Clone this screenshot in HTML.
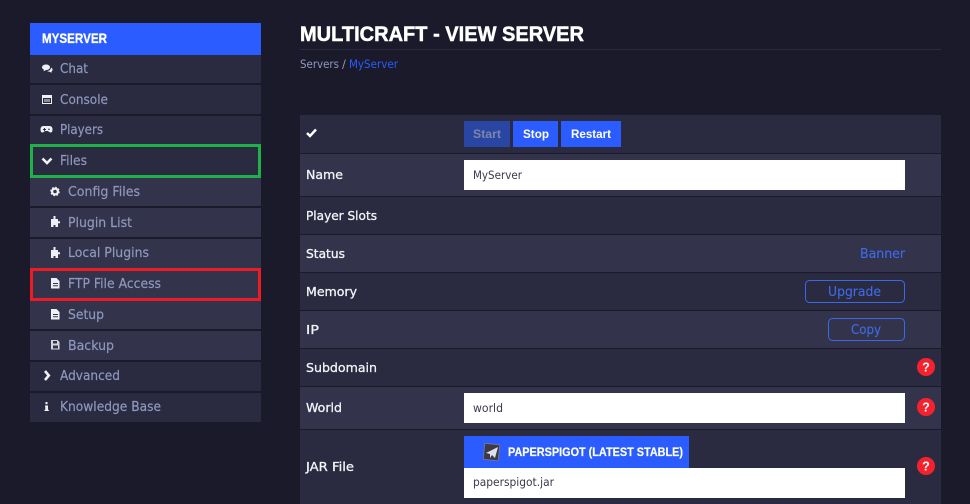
<!DOCTYPE html>
<html><head><meta charset="utf-8"><style>
html,body{margin:0;padding:0;background:#1a1a2b;width:970px;height:504px;overflow:hidden}
svg{display:block}
text{font-family:"DejaVu Sans",sans-serif}
.s{font-size:13px;fill:#8f99bd;stroke:#8f99bd;stroke-width:.18px}
.w{font-size:12.5px;fill:#f4f4f8;stroke:#f4f4f8;stroke-width:.3px}
.b{font-family:"Liberation Sans",sans-serif;font-weight:700;fill:#fff}
.i{font-size:11.500px;fill:#3a3a4a}
.l{font-size:13px;fill:#3f6ae8;stroke:#3f6ae8;stroke-width:.12px}
</style></head><body>
<svg width="970" height="504" viewBox="0 0 970 504" xmlns="http://www.w3.org/2000/svg">
<rect width="970" height="504" fill="#1a1a2b"/>
<!-- sidebar -->
<rect x="30" y="23" width="231" height="32" fill="#2b5cff"/>
<g fill="#2a2b40">
<rect x="30" y="55" width="231" height="28"/><rect x="30" y="85" width="231" height="29"/><rect x="30" y="116" width="231" height="28"/><rect x="30" y="144" width="231" height="34"/>
<rect x="30" y="362" width="231" height="29"/><rect x="30" y="393" width="231" height="29"/></g>
<g fill="#33344c">
<rect x="30" y="178" width="231" height="28"/><rect x="30" y="208" width="231" height="29"/><rect x="30" y="239" width="231" height="29"/><rect x="30" y="268" width="231" height="33"/><rect x="30" y="301" width="231" height="28"/><rect x="30" y="331" width="231" height="29"/></g>
<rect x="31.500" y="145.500" width="228" height="31" fill="none" stroke="#1fb04a" stroke-width="3"/>
<rect x="31.500" y="269.500" width="228" height="30" fill="none" stroke="#ed1c24" stroke-width="3"/>
<text class="b" x="42" y="43" font-size="13.500" stroke="#fff" stroke-width=".3" textLength="65" lengthAdjust="spacingAndGlyphs">MYSERVER</text>
<text class="s" x="60" y="73" textLength="28" lengthAdjust="spacingAndGlyphs">Chat</text>
<text class="s" x="60" y="104" textLength="48" lengthAdjust="spacingAndGlyphs">Console</text>
<text class="s" x="60" y="134" textLength="43" lengthAdjust="spacingAndGlyphs">Players</text>
<text class="s" x="60" y="165" textLength="27" lengthAdjust="spacingAndGlyphs">Files</text>
<text class="s" x="68" y="196" textLength="72" lengthAdjust="spacingAndGlyphs">Config Files</text>
<text class="s" x="68" y="227" textLength="64" lengthAdjust="spacingAndGlyphs">Plugin List</text>
<text class="s" x="68" y="257" textLength="81" lengthAdjust="spacingAndGlyphs">Local Plugins</text>
<text class="s" x="68" y="288" textLength="93" lengthAdjust="spacingAndGlyphs">FTP File Access</text>
<text class="s" x="68" y="319" textLength="36" lengthAdjust="spacingAndGlyphs">Setup</text>
<text class="s" x="68" y="350" textLength="46" lengthAdjust="spacingAndGlyphs">Backup</text>
<text class="s" x="60" y="380" textLength="60" lengthAdjust="spacingAndGlyphs">Advanced</text>
<text class="s" x="60" y="411" textLength="101" lengthAdjust="spacingAndGlyphs">Knowledge Base</text>
<!-- sidebar icons -->
<g fill="#eef0f6">
<path d="M42 67.500c0-2 2-3 4-3s4 1 4 2.800-2 2.800-4 2.800l-2.500 1.200.5-1.600c-1-.5-2-1.200-2-2.200z"/><path d="M51 67.500c1 .6 1.600 1.300 1.600 2.200 0 .8-.6 1.400-1.200 1.800l.4 1.200-2.200-1c-1 0-1.800-.2-2.400-.7 2 0 3.800-1.400 3.800-3.500z" />
<path fill-rule="evenodd" d="M42 95h10v9H42zM43 98v5h8v-5z"/><rect x="44" y="99" width="6" height="3" opacity=".5"/>
<path fill-rule="evenodd" d="M44.500 126h5c2 0 3 1.500 3 3.500s-.6 3-2 3c-1.300 0-1.800-1.500-3-1.500h-2c-1.200 0-1.700 1.500-3 1.500-1.400 0-2-1-2-3s1-3.500 3-3.500zM44 128v1h-1v1h1v1h1v-1h1v-1h-1v-1zM49 128.500a.8.800 0 1 0 0 1.600.8.800 0 0 0 0-1.600z"/>
<path d="M42.500 158.500l4.500 4.500 4.500-4.500" fill="none" stroke="#eef0f6" stroke-width="2.600"/>
<circle cx="55" cy="191.500" r="2.900" fill="none" stroke="#eef0f6" stroke-width="2.300"/>
<circle cx="55" cy="191.500" r="4.300" fill="none" stroke="#eef0f6" stroke-width="1" stroke-dasharray="1.700 1.680"/>
<path d="M53.500 216h2v3h2.500v2.200h2v2h-2v3.800h-2.500v-2h-2v2h-2.500v-8h2.500z"/>
<path d="M53.500 247h2v3h2.500v2.200h2v2h-2v3.800h-2.500v-2h-2v2h-2.500v-8h2.500z"/>
<path fill-rule="evenodd" d="M51 278h5.500l3 3v7.500H51zM53 283v1h5v-1zM53 285.200v1h5v-1z"/>
<path fill-rule="evenodd" d="M51 309h5.500l3 3v7.500H51zM53 314v1h5v-1zM53 316.200v1h5v-1z"/>
<path fill-rule="evenodd" d="M51 340h6.500l2 2v7.500H51zM53 341v2.500h4V341zM53 345.500v3h5v-3z" opacity=".85"/>
<path d="M45 371l3.800 4.500-3.800 4.500" fill="none" stroke="#eef0f6" stroke-width="2.600"/>
<rect x="45.500" y="402" width="2" height="2.200"/><path d="M45 405.500h3v4.300h.8v1.200h-4.300v-1.200h.8v-3h-.3z"/>
</g>
<!-- header -->
<text class="b" x="300" y="41" font-size="21" stroke="#fff" stroke-width=".5" textLength="284" lengthAdjust="spacingAndGlyphs">MULTICRAFT - VIEW SERVER</text>
<rect x="300" y="49" width="641" height="1" fill="#2a2b40"/>
<text x="300" y="68" font-size="11.500" fill="#8f99bd" textLength="39" lengthAdjust="spacingAndGlyphs">Servers</text>
<text x="342" y="68" font-size="11.500" fill="#8f99bd">/</text>
<text x="349" y="68" font-size="11.500" fill="#2b5cff" textLength="49" lengthAdjust="spacingAndGlyphs">MyServer</text>
<!-- table -->
<g fill="#2a2b40"><rect x="300" y="115" width="641" height="38"/><rect x="300" y="197" width="641" height="37"/><rect x="300" y="273" width="641" height="37"/><rect x="300" y="349" width="641" height="37"/><rect x="300" y="430" width="641" height="74"/></g>
<g fill="#33344c"><rect x="300" y="154" width="641" height="42"/><rect x="300" y="235" width="641" height="37"/><rect x="300" y="311" width="641" height="37"/><rect x="300" y="387" width="641" height="42"/></g>
<path d="M307 133l3 3 6-6.500" fill="none" stroke="#fff" stroke-width="2.500"/>
<rect x="464" y="121" width="46" height="26" fill="#2a46a5"/>
<rect x="513" y="121" width="45" height="26" fill="#2b5cff"/>
<rect x="561" y="121" width="60" height="26" fill="#2b5cff"/>
<text class="b" x="473" y="138" font-size="11.500" style="fill:#7d86a8" textLength="28" lengthAdjust="spacingAndGlyphs">Start</text>
<text class="b" x="523" y="138" font-size="11.500" textLength="26" lengthAdjust="spacingAndGlyphs">Stop</text>
<text class="b" x="571" y="138" font-size="11.500" textLength="40" lengthAdjust="spacingAndGlyphs">Restart</text>
<text class="w" x="306" y="179" textLength="37" lengthAdjust="spacingAndGlyphs">Name</text>
<text class="w" x="306" y="220" textLength="71" lengthAdjust="spacingAndGlyphs">Player Slots</text>
<text class="w" x="306" y="258" textLength="39" lengthAdjust="spacingAndGlyphs">Status</text>
<text class="w" x="306" y="296" textLength="51" lengthAdjust="spacingAndGlyphs">Memory</text>
<text class="w" x="306" y="334" textLength="13" lengthAdjust="spacingAndGlyphs">IP</text>
<text class="w" x="306" y="372" textLength="71" lengthAdjust="spacingAndGlyphs">Subdomain</text>
<text class="w" x="306" y="412" textLength="36" lengthAdjust="spacingAndGlyphs">World</text>
<text class="w" x="306" y="471" textLength="48" lengthAdjust="spacingAndGlyphs">JAR File</text>
<rect x="464" y="160" width="441" height="30" fill="#fff"/>
<text class="i" x="473" y="179" textLength="49" lengthAdjust="spacingAndGlyphs">MyServer</text>
<text class="l" x="860" y="258" textLength="45" lengthAdjust="spacingAndGlyphs">Banner</text>
<rect x="805.500" y="280.500" width="99" height="22" rx="4" fill="none" stroke="#3b69e6"/>
<text class="l" x="828" y="296" textLength="53" lengthAdjust="spacingAndGlyphs">Upgrade</text>
<rect x="828.500" y="318.500" width="76" height="22" rx="4" fill="none" stroke="#3b69e6"/>
<text class="l" x="851" y="334" textLength="30" lengthAdjust="spacingAndGlyphs">Copy</text>
<rect x="464" y="393" width="441" height="30" fill="#fff"/>
<text class="i" x="473" y="412" textLength="30" lengthAdjust="spacingAndGlyphs">world</text>
<rect x="464" y="436" width="225" height="32" fill="#2b5cff"/>
<rect x="484" y="444" width="15" height="16" fill="#3a3a48" stroke="#7a7a88" stroke-width=".8" transform="rotate(6 491 452)"/>
<path d="M486 453l12-6-3 11-3-3-2 3v-4z" fill="#dfe1ea"/>
<text class="b" x="508" y="456" font-size="11.500" stroke="#fff" stroke-width=".2" textLength="175" lengthAdjust="spacingAndGlyphs">PAPERSPIGOT (LATEST STABLE)</text>
<rect x="464" y="468" width="441" height="30" fill="#fff"/>
<text class="i" x="473" y="486" textLength="81" lengthAdjust="spacingAndGlyphs">paperspigot.jar</text>
<!-- help -->
<g fill="#f5222d"><circle cx="926" cy="367" r="9"/><circle cx="926" cy="407" r="9"/><circle cx="926" cy="466" r="9"/></g>
<text class="b" x="926" y="371.500" font-size="12.500" text-anchor="middle">?</text>
<text class="b" x="926" y="411.500" font-size="12.500" text-anchor="middle">?</text>
<text class="b" x="926" y="470.500" font-size="12.500" text-anchor="middle">?</text>
</svg>
</body></html>
